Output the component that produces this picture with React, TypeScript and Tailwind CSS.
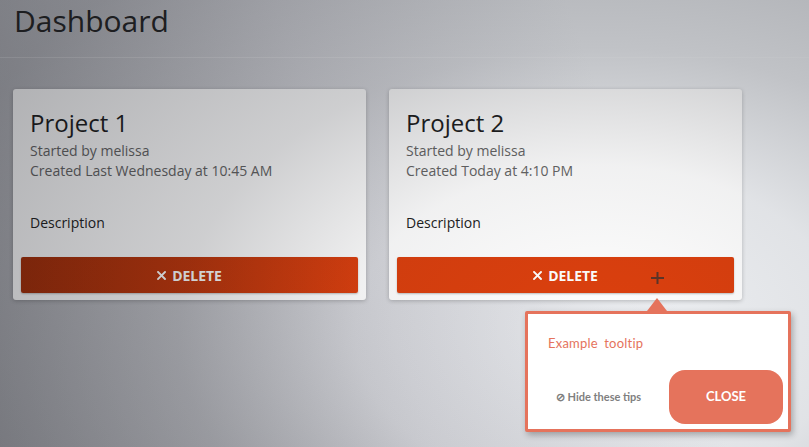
import React from "react";

function XIcon() {
  return (
    <svg width="9" height="9" viewBox="0 0 9 9" className="shrink-0">
      <path d="M1 1 L8 8 M8 1 L1 8" stroke="currentColor" strokeWidth="1.9" strokeLinecap="square" />
    </svg>
  );
}

function Card({
  title,
  created,
  buttonClass,
}: {
  title: string;
  created: string;
  buttonClass: string;
}) {
  return (
    <div className="w-[353px] h-[211px] bg-white rounded-[3px] shadow-[0_1px_4px_rgba(0,0,0,0.22)] flex flex-col px-[8px] pt-[18px]">
      <div className="pl-[9px]">
        <h2 className="text-[24px] leading-[32px] text-[#1e1e1e]">{title}</h2>
        <p className="mt-[2px] text-[14px] leading-[20px] text-[#666]">Started by melissa</p>
        <p className="text-[14px] leading-[20px] text-[#666]">{created}</p>
        <p className="mt-[32px] text-[14px] leading-[20px] text-[#222]">Description</p>
      </div>
      <button
        className={`mt-auto mb-[7px] h-[36px] w-full rounded-[2px] shadow-[0_1px_2px_rgba(0,0,0,0.25)] flex items-center justify-center gap-[6px] text-white text-[14px] font-bold tracking-[-0.1px] ${buttonClass}`}
      >
        <XIcon />
        <span>DELETE</span>
      </button>
    </div>
  );
}

export default function App() {
  return (
    <div className="relative w-full h-[447px] overflow-hidden font-['Open_Sans',sans-serif] bg-[image:linear-gradient(70deg,#a4a5aa_0%,#d6d7dc_45%,#eef0f3_75%)]">
      <header className="h-[58px] border-b border-white/25 px-[14px] pt-[5px]">
        <h1 className="text-[30px] leading-[32px] text-[#262626]">Dashboard</h1>
      </header>

      <main className="flex gap-[23px] pl-[13px] pt-[31px]">
        <Card
          title="Project 1"
          created="Created Last Wednesday at 10:45 AM"
          buttonClass="bg-[image:linear-gradient(to_right,#a52f08,#dc400f)]"
        />
        <Card
          title="Project 2"
          created="Created Today at 4:10 PM"
          buttonClass="bg-[#dc400e]"
        />
      </main>

      {/* spotlight overlay */}
      <div className="pointer-events-none absolute inset-0 bg-[image:radial-gradient(ellipse_700px_470px_at_600px_330px,rgba(10,12,20,0)_0%,rgba(10,12,20,0.06)_35%,rgba(10,12,20,0.2)_60%,rgba(10,12,20,0.32)_100%)]" />

      {/* hotspot marker */}
      <svg
        className="absolute left-[651px] top-[272px]"
        width="13"
        height="12"
        viewBox="0 0 13 12"
      >
        <path d="M0 6 H13 M6.5 0 V12" stroke="#5a3428" strokeWidth="2" />
      </svg>

      {/* tooltip */}
      <div className="absolute left-[525px] top-[311px] w-[266px] h-[121px] bg-white border-[3px] border-[#e5735c] rounded-[2px] shadow-[2px_3px_6px_rgba(0,0,0,0.28)] flex flex-col font-['Lato',sans-serif]">
        <div className="absolute -top-[16px] left-[119px] w-0 h-0 border-l-[10px] border-r-[10px] border-b-[13px] border-l-transparent border-r-transparent border-b-[#e5735c]" />
        <p className="pt-[21px] pl-[20px] text-[13px] leading-[16px] tracking-[0.2px] [word-spacing:3px] text-[#e5735c]">
          Example tooltip
        </p>
        <div className="mt-auto flex items-center pr-[5px] pb-[5px]">
          <div className="flex-1 flex justify-center">
            <span className="text-[11px] font-bold text-[#7f7f7f]">⊘ Hide these tips</span>
          </div>
          <button className="w-[114px] h-[54px] rounded-[16px] bg-[#e5735c] text-white text-[13px] font-bold">
            CLOSE
          </button>
        </div>
      </div>
    </div>
  );
}
